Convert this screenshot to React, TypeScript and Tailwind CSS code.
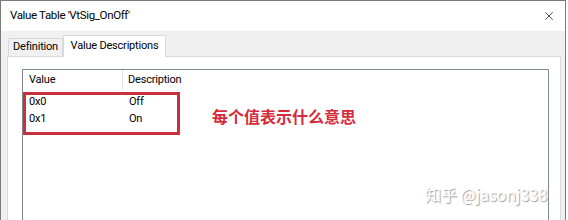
import { X } from 'lucide-react';

const rows = [
  { value: '0x0', desc: 'Off' },
  { value: '0x1', desc: 'On' },
];

export default function App() {
  return (
    <div className="relative w-[568px] h-[220px] overflow-hidden bg-white font-['Roboto',sans-serif] text-[11px] tracking-[-0.2px] text-black">
      <div className="w-[566px] h-[221px] border-l border-t border-r border-[#7a7a7a] flex flex-col">
        {/* title bar */}
        <div className="h-[30px] shrink-0 bg-white flex items-center justify-between pl-[9px] pr-[8px]">
          <span className="leading-none text-[11.5px] tracking-[-0.35px]">Value Table 'VtSig_OnOff'</span>
          <X className="w-[14px] h-[14px] mr-[1px]" strokeWidth={1.2} />
        </div>

        {/* dialog body */}
        <div className="flex-1 bg-[#f0f0f0] pl-[6px] pr-[4px] pt-[4px] flex flex-col">
          {/* tabs */}
          <div className="flex items-end h-[21px] relative z-10">
            <div className="w-[55px] h-[18px] ml-[1px] border border-b-0 border-[#d9d9d9] bg-[#f0f0f0] flex items-center justify-center">
              Definition
            </div>
            <div className="w-[103px] h-[22px] -mb-[1px] border border-b-0 border-[#d9d9d9] bg-white flex items-center justify-center">
              Value Descriptions
            </div>
          </div>

          {/* tab panel */}
          <div className="flex-1 border border-[#d9d9d9] bg-white pt-[12px] pl-[14px] pr-[11px]">
            <div className="h-full border-l border-t border-r border-[#828790] bg-white">
              <div className="flex h-[20px]">
                <div className="w-[100px] pl-[6px] flex items-center border-r border-[#e5e5e5]">Value</div>
                <div className="pl-[5px] flex items-center">Description</div>
              </div>
              <div className="pt-[4px]">
                {rows.map((r) => (
                  <div key={r.value} className="flex h-[17px] items-center">
                    <div className="w-[100px] pl-[6px]">{r.value}</div>
                    <div className="pl-[6px]">{r.desc}</div>
                  </div>
                ))}
              </div>
            </div>
          </div>
        </div>
      </div>

      {/* annotation */}
      <div className="absolute left-[23px] top-[92px] w-[157px] h-[43px] border-[3px] border-[#c9303b]" />
      <div className="absolute left-[212px] top-[105px] text-[16px] font-bold tracking-normal text-[#d42c3a] font-['Noto_Sans_CJK_SC',sans-serif] leading-[22px]">
        每个值表示什么意思
      </div>

      {/* watermark */}
      <div className="absolute left-[425px] top-[182px] text-[16px] tracking-normal text-white font-['Noto_Sans_CJK_SC',sans-serif] leading-[24px] [text-shadow:1px_1px_1px_rgba(0,0,0,0.4)]">
        知乎 @jasonj338
      </div>
    </div>
  );
}
